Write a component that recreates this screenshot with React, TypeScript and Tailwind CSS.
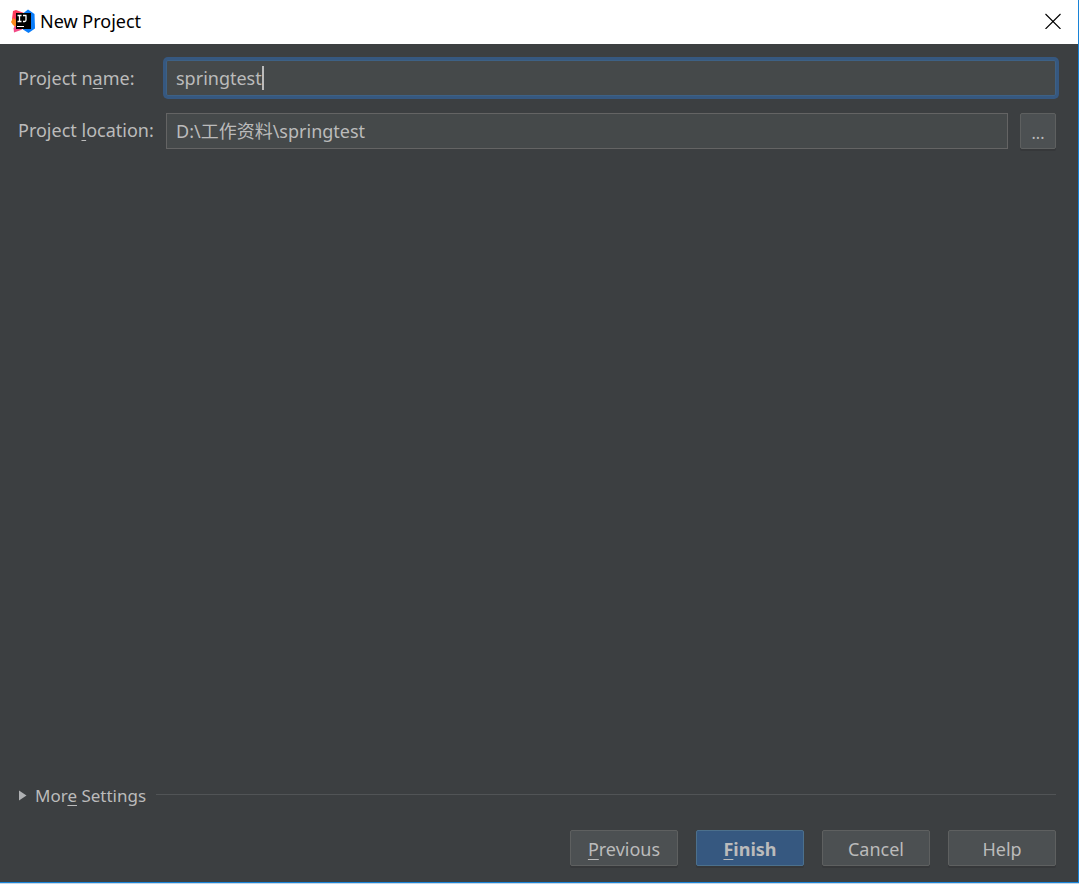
import { useState } from 'react';
import type { ReactNode } from 'react';

const FONT = "font-['Noto_Sans','Noto_Sans_CJK_SC',sans-serif]";

const FIELD =
  'h-9 min-w-0 w-full border bg-[#45494a] px-[9px] text-lg leading-6 text-[#bbbbbb] outline-none';

const BUTTON =
  'h-9 w-[108px] rounded-xs border border-[#5e6060] bg-[#4c5052] pt-0.5 text-lg leading-6 shadow-[0_2px_0_#36383a]';

const DEFAULT_BUTTON =
  'h-9 w-[108px] rounded-xs border border-[#4c708c] bg-[#365880] pt-0.5 text-lg leading-6 font-bold shadow-[0_2px_0_#36383a]';

const Mnemonic = ({ children }: { children: ReactNode }) => (
  <span className="underline decoration-1 underline-offset-3">{children}</span>
);

const IdeaLogo = () => (
  <svg className="size-6" viewBox="0 0 24 24" aria-hidden="true">
    <path d="M2 2 5 1 13 4 13 9 6 20 4 22 3 15 1 10Z" fill="#fc3a5b" />
    <path d="M0 13 2 9 5 11 5 18 2 16Z" fill="#fd8a1c" />
    <path d="M3 23.5 2.5 19 5 17 13 19 10 21Z" fill="#f24a86" />
    <path d="M12 4.5 17 0.5 23.5 5 24 19.5 17.5 24 12 20.5Z" fill="#087cfa" />
    <rect x="5" y="4" width="15" height="16" fill="#000" />
    <path
      d="M6.5 6.5h4M8.5 6.5v6M6.5 12.5h4M12 6.5h3.5M15 6.5v4.5q0 1.5-1.5 1.5H12"
      fill="none"
      stroke="#fff"
      strokeWidth="1.3"
    />
    <path d="M6 17.5h7" stroke="#fff" strokeWidth="1" />
  </svg>
);

const TitleBar = () => (
  <header className="flex h-11 items-center bg-white pr-[17px] pb-0.5 pl-[11px] text-black">
    <IdeaLogo />
    <h1 className="ml-[5px] text-lg leading-6">New Project</h1>
    <button type="button" aria-label="Close" className="ml-auto">
      <svg className="size-4" viewBox="0 0 16 16" fill="none" stroke="#000" strokeWidth="1.1">
        <path d="M0.5 1 15.5 16M15.5 1 0.5 16" />
      </svg>
    </button>
  </header>
);

export default function App() {
  const [name, setName] = useState('springtest');
  const [location, setLocation] = useState('D:\\工作资料\\springtest');

  return (
    <div className={`min-h-screen bg-[#c4d6e6] pb-px ${FONT}`}>
      <div className="flex min-h-[calc(100vh-1px)] flex-col border-r border-b border-[#1883d7] bg-[#3c3f41] text-[#bbbbbb]">
        <TitleBar />

        <main className="flex flex-1 flex-col pt-4 pr-[22px] pb-4 pl-[18px]">
          <div className="grid grid-cols-[148px_1fr] items-center gap-y-[17px]">
            <label htmlFor="project-name" className="text-lg leading-6 whitespace-nowrap">
              Project n<Mnemonic>a</Mnemonic>me:
            </label>
            <div className="relative flex">
              <input
                id="project-name"
                type="text"
                value={name}
                onChange={(e) => setName(e.target.value)}
                className={`${FIELD} rounded-xs border-[#3d6185] ring-3 ring-[#365880]`}
              />
              {/* Text cursor, kept at the end of the typed name */}
              <div className="pointer-events-none absolute inset-y-0 left-[10px] flex items-center text-lg leading-6">
                <span className="invisible" aria-hidden="true">{name}</span>
                <span className="h-6 w-0.5 bg-[#bbbbbb]" />
              </div>
            </div>

            <label htmlFor="project-location" className="pb-0.5 text-lg leading-6 whitespace-nowrap">
              Project <Mnemonic>l</Mnemonic>ocation:
            </label>
            <div className="flex gap-3">
              <input
                id="project-location"
                type="text"
                value={location}
                onChange={(e) => setLocation(e.target.value)}
                className={`${FIELD} border-[#646464] pb-0.5`}
              />
              <button
                type="button"
                aria-label="Browse"
                className="size-9 shrink-0 rounded-xs border border-[#5e6060] bg-[#4c5052] pt-1 text-base leading-6 shadow-[0_2px_0_#36383a]"
              >
                ...
              </button>
            </div>
          </div>

          <div className="mt-auto flex items-center gap-[10px]">
            <button type="button" aria-expanded="false" className="flex items-center gap-2 text-[17px] leading-6">
              <svg className="ml-px h-3 w-2" viewBox="0 0 8 12" fill="#afb1b3" aria-hidden="true">
                <path d="M0 0.5 7.5 5.5 0 10.5Z" />
              </svg>
              <span>
                Mor<Mnemonic>e</Mnemonic> Settings
              </span>
            </button>
            <div className="mb-1 h-px flex-1 bg-[#515456]" />
          </div>

          <div className="mt-[22px] flex justify-end gap-[18px]">
            <button type="button" className={BUTTON}>
              <Mnemonic>P</Mnemonic>revious
            </button>
            <button type="button" className={DEFAULT_BUTTON}>
              <Mnemonic>F</Mnemonic>inish
            </button>
            <button type="button" className={BUTTON}>Cancel</button>
            <button type="button" className={BUTTON}>Help</button>
          </div>
        </main>
      </div>
    </div>
  );
}
